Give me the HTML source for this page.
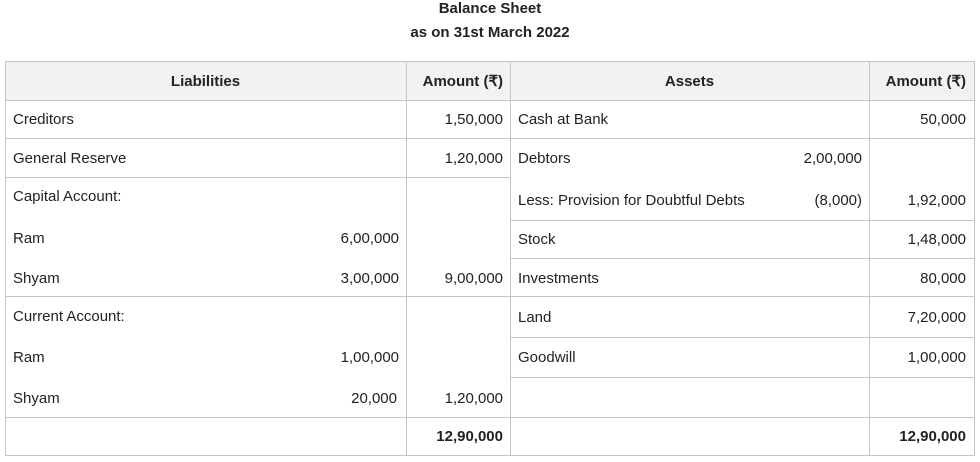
<!DOCTYPE html>
<html><head><meta charset="utf-8"><style>
body{margin:0;width:980px;height:462px;background:#fff;font-family:"Liberation Sans",sans-serif;color:#222;position:relative;overflow:hidden}
.t{position:absolute;font-size:15px;line-height:20px;white-space:nowrap;margin-top:1px}
.b{font-weight:bold}
.r{text-align:right}
.h{position:absolute;height:1px;background:#c6c6c6}
.v{position:absolute;width:1px;background:#c6c6c6}
</style></head><body>
<div class="t b" style="left:0;width:980px;text-align:center;top:-2px">Balance Sheet</div>
<div class="t b" style="left:0;width:980px;text-align:center;top:22px">as on 31st March 2022</div>
<div style="position:absolute;left:5px;top:61px;width:969px;height:39px;background:#f2f2f2"></div>
<div class="h" style="left:5px;width:970px;top:61px"></div>
<div class="h" style="left:5px;width:970px;top:455px"></div>
<div class="v" style="left:5px;top:61px;height:395px"></div>
<div class="v" style="left:974px;top:61px;height:395px"></div>
<div class="v" style="left:406px;top:61px;height:395px"></div>
<div class="v" style="left:510px;top:61px;height:395px"></div>
<div class="v" style="left:869px;top:61px;height:395px"></div>
<div class="h" style="left:5px;width:505px;top:100px"></div>
<div class="h" style="left:5px;width:505px;top:138px"></div>
<div class="h" style="left:5px;width:505px;top:177px"></div>
<div class="h" style="left:5px;width:505px;top:296px"></div>
<div class="h" style="left:5px;width:505px;top:417px"></div>
<div class="h" style="left:510px;width:465px;top:100px"></div>
<div class="h" style="left:510px;width:465px;top:138px"></div>
<div class="h" style="left:510px;width:465px;top:220px"></div>
<div class="h" style="left:510px;width:465px;top:258px"></div>
<div class="h" style="left:510px;width:465px;top:296px"></div>
<div class="h" style="left:510px;width:465px;top:337px"></div>
<div class="h" style="left:510px;width:465px;top:377px"></div>
<div class="h" style="left:510px;width:465px;top:417px"></div>
<div class="t b" style="left:5px;width:401px;text-align:center;top:71px">Liabilities</div>
<div class="t b r" style="left:406px;width:97px;top:71px">Amount (₹)</div>
<div class="t b" style="left:510px;width:359px;text-align:center;top:71px">Assets</div>
<div class="t b r" style="left:869px;width:97px;top:71px">Amount (₹)</div>
<div class="t" style="left:13px;top:109px">Creditors</div>
<div class="t r" style="left:406px;width:97px;top:109px">1,50,000</div>
<div class="t" style="left:13px;top:148px">General Reserve</div>
<div class="t r" style="left:406px;width:97px;top:148px">1,20,000</div>
<div class="t" style="left:13px;top:186px">Capital Account:</div>
<div class="t" style="left:13px;top:228px">Ram</div>
<div class="t r" style="left:300px;width:99px;top:228px">6,00,000</div>
<div class="t" style="left:13px;top:268px">Shyam</div>
<div class="t r" style="left:300px;width:99px;top:268px">3,00,000</div>
<div class="t r" style="left:406px;width:97px;top:268px">9,00,000</div>
<div class="t" style="left:13px;top:306px">Current Account:</div>
<div class="t" style="left:13px;top:347px">Ram</div>
<div class="t r" style="left:300px;width:99px;top:347px">1,00,000</div>
<div class="t" style="left:13px;top:388px">Shyam</div>
<div class="t r" style="left:300px;width:97px;top:388px">20,000</div>
<div class="t r" style="left:406px;width:97px;top:388px">1,20,000</div>
<div class="t b r" style="left:406px;width:97px;top:426px">12,90,000</div>
<div class="t" style="left:518px;top:109px">Cash at Bank</div>
<div class="t r" style="left:869px;width:97px;top:109px">50,000</div>
<div class="t" style="left:518px;top:148px">Debtors</div>
<div class="t r" style="left:760px;width:102px;top:148px">2,00,000</div>
<div class="t" style="left:518px;top:190px">Less: Provision for Doubtful Debts</div>
<div class="t r" style="left:760px;width:102px;top:190px">(8,000)</div>
<div class="t r" style="left:869px;width:97px;top:190px">1,92,000</div>
<div class="t" style="left:518px;top:229px">Stock</div>
<div class="t r" style="left:869px;width:97px;top:229px">1,48,000</div>
<div class="t" style="left:518px;top:268px">Investments</div>
<div class="t r" style="left:869px;width:97px;top:268px">80,000</div>
<div class="t" style="left:518px;top:307px">Land</div>
<div class="t r" style="left:869px;width:97px;top:307px">7,20,000</div>
<div class="t" style="left:518px;top:347px">Goodwill</div>
<div class="t r" style="left:869px;width:97px;top:347px">1,00,000</div>
<div class="t b r" style="left:869px;width:97px;top:426px">12,90,000</div>
</body></html>
